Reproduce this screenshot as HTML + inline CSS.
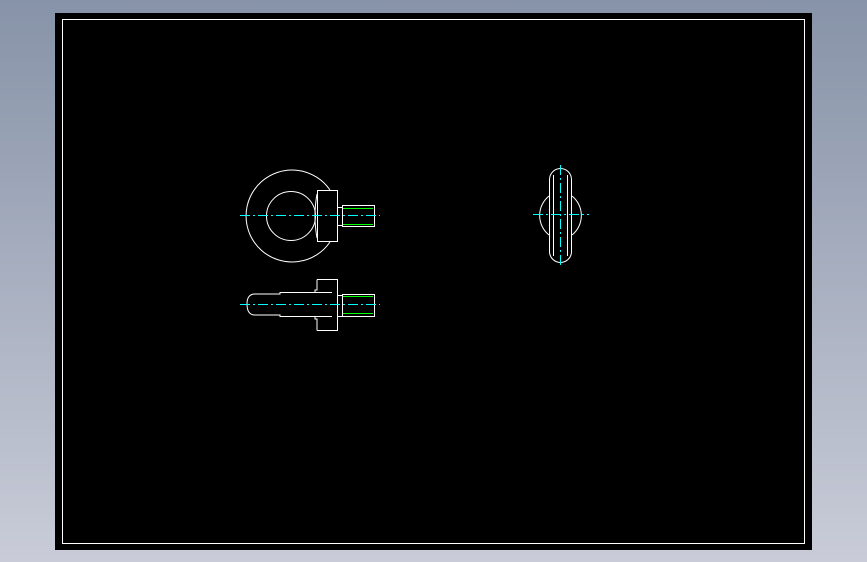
<!DOCTYPE html>
<html><head><style>
html,body{margin:0;padding:0;width:867px;height:562px;overflow:hidden;background:linear-gradient(#8793a8,#c9ccd8);}
svg{position:absolute;left:0;top:0}
</style></head><body>
<svg width="867" height="562" viewBox="0 0 867 562">
<rect x="55" y="13" width="757" height="537" fill="#000"/>
<rect x="62.5" y="19.5" width="742" height="524" fill="none" stroke="#fff" stroke-width="1"/>
<g fill="none" stroke="#fff" stroke-width="1">
<path d="M330 190 A46 46 0 1 0 330 242"/>
<circle cx="291" cy="216" r="24.5"/>
<rect x="317.5" y="190.5" width="20" height="51" fill="#000"/>
<path d="M317 194 Q313 216 317 238"/>
<rect x="337.5" y="207.5" width="5" height="18"/>
<rect x="342.5" y="205.5" width="32" height="21"/>
<path d="M317 279.5 H337.5 V330.5 H317 M317 279.5 V290 H315 V293 M317 330.5 V319 H315 V316"/>
<path d="M332 292.5 H315 M315 292.5 H280 V294 H255 Q247 294 247 304 Q247 315 255 315 H280 V316.5 H332"/>
<rect x="337.5" y="295.5" width="5" height="21"/>
<rect x="342.5" y="294.5" width="32" height="22"/>
<path d="M549 196 A25 25 0 0 0 549 235"/>
<path d="M572 196 A25 25 0 0 1 572 235"/>
<rect x="549.5" y="168.5" width="22" height="94" rx="11"/>
<line x1="553.5" y1="175" x2="553.5" y2="256"/>
<line x1="567.5" y1="175" x2="567.5" y2="256"/>
</g>
<g stroke="#0f0" stroke-width="1">
<line x1="343" y1="208.5" x2="373" y2="208.5"/>
<line x1="343" y1="224.5" x2="373" y2="224.5"/>
<line x1="343" y1="296.5" x2="373" y2="296.5"/>
<line x1="343" y1="313.5" x2="373" y2="313.5"/>
</g>
<g stroke="#0ff" stroke-width="1" stroke-dasharray="10,3,2,3">
<line x1="240" y1="215.5" x2="380" y2="215.5"/>
<line x1="240" y1="304.5" x2="380" y2="304.5"/>
<line x1="533" y1="214.5" x2="589" y2="214.5"/>
<line x1="560.5" y1="165" x2="560.5" y2="268"/>
</g>
</svg>
</body></html>
